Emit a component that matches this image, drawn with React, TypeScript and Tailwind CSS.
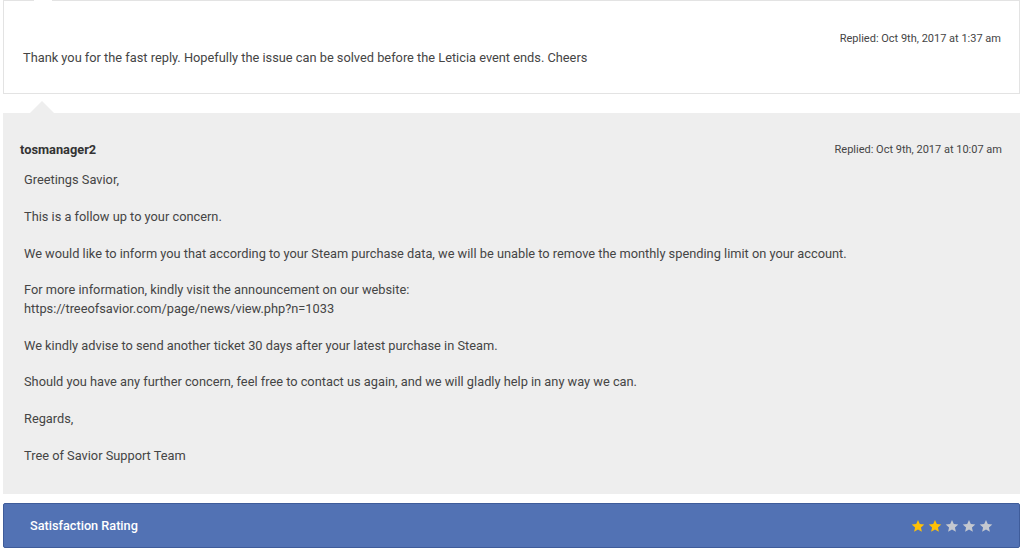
import React from "react";

const Star = ({ filled }: { filled: boolean }) => (
  <svg width="14" height="14" viewBox="0 0 24 24" className="block">
    <path
      d="M12 1.5l3.1 7.1 7.7.7-5.8 5.1 1.7 7.6L12 18l-6.7 4 1.7-7.6-5.8-5.1 7.7-.7z"
      fill={filled ? "#ffc107" : "#c4c8d0"}
    />
  </svg>
);

export default function App() {
  const paragraphs: string[][] = [
    ["Greetings Savior,"],
    ["This is a follow up to your concern."],
    [
      "We would like to inform you that according to your Steam purchase data, we will be unable to remove the monthly spending limit on your account.",
    ],
    [
      "For more information, kindly visit the announcement on our website:",
      "https://treeofsavior.com/page/news/view.php?n=1033",
    ],
    ["We kindly advise to send another ticket 30 days after your latest purchase in Steam."],
    [
      "Should you have any further concern, feel free to contact us again, and we will gladly help in any way we can.",
    ],
    ["Regards,"],
    ["Tree of Savior Support Team"],
  ];
  return (
    <div
      className="w-[1024px] h-[550px] bg-white overflow-hidden pl-[3px] pr-[4px] text-[#454545]"
      style={{ fontFamily: "Roboto, 'Liberation Sans', sans-serif" }}
    >
      {/* white reply box */}
      <div className="relative border border-[#e3e3e3] bg-white h-[94px] pt-[30px] pl-[19px] pr-[18px]">
        <div className="absolute left-[30px] top-[-1px] w-[18px] h-[3px] bg-white" />
        <div className="text-right text-[11px] leading-[16px]">Replied: Oct 9th, 2017 at 1:37 am</div>
        <div className="text-[12.8px] leading-[18px] mt-[2px]">
          Thank you for the fast reply. Hopefully the issue can be solved before the Leticia event ends. Cheers
        </div>
      </div>

      {/* grey reply box */}
      <div className="relative mt-[19px] bg-[#eeeeee] h-[381px] pt-[28px] pl-[17px] pr-[18px]">
        <div className="absolute left-[27px] top-[-12px] w-0 h-0 border-l-[12px] border-r-[12px] border-b-[12px] border-l-transparent border-r-transparent border-b-[#eeeeee]" />
        <div className="flex justify-between items-center h-[18px]">
          <span className="text-[12.8px] font-bold text-[#333333]">tosmanager2</span>
          <span className="text-[11px]">Replied: Oct 9th, 2017 at 10:07 am</span>
        </div>
        <div className="mt-[12px] pl-[4px] text-[12.8px] leading-[18.4px]">
          {paragraphs.map((p, i) => (
            <div key={i} className={i > 0 ? "mt-[18.4px]" : ""}>
              {p.map((l, j) => (
                <div key={j}>{l}</div>
              ))}
            </div>
          ))}
        </div>
      </div>

      {/* satisfaction bar */}
      <div className="mt-[9px] h-[45px] bg-[#5272b4] border border-[#3f5c9a] rounded-[2px] flex items-center justify-between pl-[26px] pr-[26px]">
        <span className="text-white text-[12.7px] font-medium">Satisfaction Rating</span>
        <div className="flex gap-[3px]">
          <Star filled />
          <Star filled />
          <Star filled={false} />
          <Star filled={false} />
          <Star filled={false} />
        </div>
      </div>
    </div>
  );
}
